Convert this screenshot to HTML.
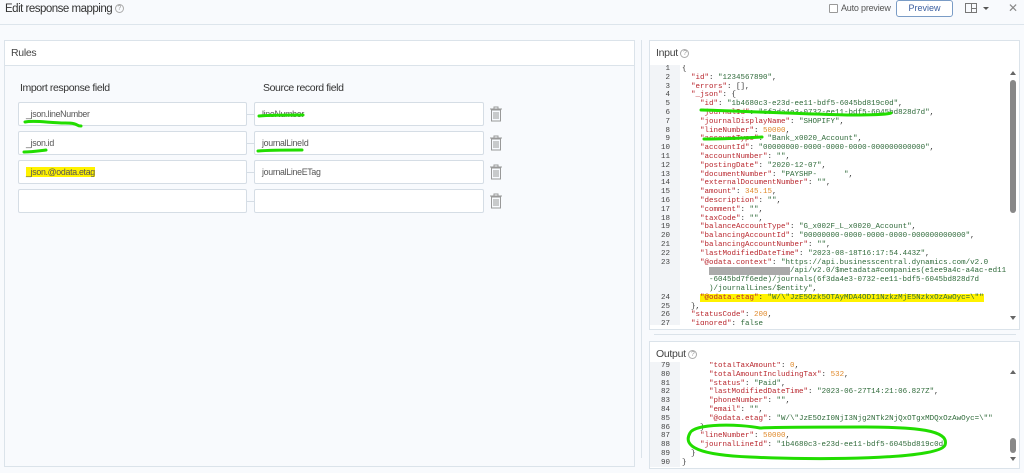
<!DOCTYPE html>
<html><head><meta charset="utf-8"><style>
*{box-sizing:border-box;margin:0;padding:0}
body{width:1024px;height:473px;background:#f8fafd;font-family:"Liberation Sans",sans-serif;position:relative;overflow:hidden;color:#333}
.abs{position:absolute}
.hdr{left:0;top:0;width:1024px;height:25px;border-bottom:1px solid #dde5ec;background:#f8fafd}
.q{display:inline-block;width:9px;height:9px;border:1px solid #aaa;border-radius:50%;font-size:7px;line-height:7px;text-align:center;color:#999;vertical-align:middle;letter-spacing:0}
.panel{background:#f8fafd;border:1px solid #dbe3ea}
.ph{background:#fff;border-bottom:1px solid #dbe3ea;height:25px;font-size:10.5px;letter-spacing:-0.3px;line-height:25px;padding-left:6px;color:#444}
.inp{position:absolute;height:24px;background:#fff;border:1px solid #d5dde5;border-radius:2px;font-size:8.8px;letter-spacing:-0.3px;line-height:22px;padding-left:7px;color:#555}
.code{font-family:"Liberation Mono",monospace;font-size:7.5px;line-height:8.8px;white-space:pre}
.gut{position:absolute;background:#f2f4f7;text-align:right;color:#444}
.k{color:#b8262d}.s{color:#2f6a3a}.n{color:#e08a2c}.p{color:#333}
.lbl{font-size:10.5px;letter-spacing:-0.4px;color:#333}
</style></head><body>
<div class="abs hdr">
 <div class="abs" style="left:5px;top:3px;font-size:11.5px;letter-spacing:-0.5px;color:#333">Edit response mapping <span class="q">?</span></div>
 <div class="abs" style="left:829px;top:4px;width:9px;height:9px;border:1px solid #999;border-radius:1px;background:#fff"></div>
 <div class="abs" style="left:841px;top:3px;font-size:9px;letter-spacing:-0.2px;color:#555">Auto preview</div>
 <div class="abs" style="left:896px;top:0;width:57px;height:17px;border:1px solid #7a9cc6;border-radius:3px;background:#fff;font-size:9px;color:#3b5fa0;text-align:center;line-height:15px">Preview</div>
 <div class="abs" style="left:965px;top:3px;width:12px;height:10px;border:1px solid #777"></div>
 <div class="abs" style="left:971px;top:3px;width:1px;height:10px;background:#777"></div>
 <div class="abs" style="left:971px;top:8px;width:6px;height:1px;background:#777"></div>
 <div class="abs" style="left:983px;top:7px;border-left:3px solid transparent;border-right:3px solid transparent;border-top:3px solid #555"></div>
 <div class="abs" style="left:1008px;top:1px;font-size:12px;color:#888">✕</div>
</div>

<div class="abs panel" style="left:4px;top:40px;width:631px;height:427px">
 <div class="ph">Rules</div>
</div>
<div class="abs lbl" style="left:20px;top:82px">Import response field</div>
<div class="abs lbl" style="left:263px;top:82px">Source record field</div>
<div class="inp" style="left:18px;top:102px;width:229px">_json.lineNumber</div>
<div class="inp" style="left:254px;top:102px;width:230px">lineNumber</div>
<div class="inp" style="left:18px;top:131px;width:229px">_json.id</div>
<div class="inp" style="left:254px;top:131px;width:230px">journalLineId</div>
<div class="inp" style="left:18px;top:160px;width:229px"><span style="background:#fff200">_json.@odata.etag</span></div>
<div class="inp" style="left:254px;top:160px;width:230px">journalLineETag</div>
<div class="inp" style="left:18px;top:189px;width:229px"></div>
<div class="inp" style="left:254px;top:189px;width:230px"></div>
<div class="abs" style="left:247px;top:114px;width:7px;height:1px;background:#d5dde5"></div>
<div class="abs" style="left:247px;top:143px;width:7px;height:1px;background:#d5dde5"></div>
<div class="abs" style="left:247px;top:172px;width:7px;height:1px;background:#d5dde5"></div>
<div class="abs" style="left:247px;top:201px;width:7px;height:1px;background:#d5dde5"></div>
<svg class="abs" style="left:0;top:0" width="640" height="473">
 <g fill="none" stroke="#999" stroke-width="1">
  <g id="t"><path d="M490 109h12M494 109v-2h4v2M491.5 110h9v11h-9z M494 112v7M496 112v7M498 112v7"/></g>
  <use href="#t" y="29"/><use href="#t" y="58"/><use href="#t" y="87"/>
 </g>
 <g fill="none" stroke="#22dd00" stroke-width="3" stroke-linecap="round">
  <path d="M25 122c10-2 25 1 40 1s10 3 16 3"/>
  <path d="M24 152c8 0 14-1 22-2"/>
  <path d="M259 116c12-1 30-1 44-1"/>
  <path d="M258 151c12-1 30-1 44-1"/>
 </g>
</svg>

<div class="abs" style="left:641px;top:40px;width:1px;height:418px;background:#dbe3ea"></div>

<!-- Input panel -->
<div class="abs panel" style="left:649px;top:40px;width:371px;height:290px;background:#fff">
 <div class="ph" style="border-bottom:none">Input <span class="q">?</span></div>
</div>
<div class="gut code" style="left:650px;top:65px;width:30px;height:260px;padding-right:10px">1
2
3
4
5
6
7
8
9
10
11
12
13
14
15
16
17
18
19
20
21
22
23



24
25
26
27</div>
<div class="abs code" style="left:682px;top:65px;width:325px;height:260px;overflow:hidden"><span class="p">{</span>
  <span class="k">"id"</span>: <span class="s">"1234567890"</span>,
  <span class="k">"errors"</span>: [],
  <span class="k">"_json"</span>: {
    <span class="k">"id"</span>: <span class="s">"1b4680c3-e23d-ee11-bdf5-6045bd819c0d"</span>,
    <span class="k">"journalId"</span>: <span class="s">"6f3da4e3-0732-ee11-bdf5-6045bd828d7d"</span>,
    <span class="k">"journalDisplayName"</span>: <span class="s">"SHOPIFY"</span>,
    <span class="k">"lineNumber"</span>: <span class="n">50000</span>,
    <span class="k">"accountType"</span>: <span class="s">"Bank_x0020_Account"</span>,
    <span class="k">"accountId"</span>: <span class="s">"00000000-0000-0000-0000-000000000000"</span>,
    <span class="k">"accountNumber"</span>: <span class="s">""</span>,
    <span class="k">"postingDate"</span>: <span class="s">"2020-12-07"</span>,
    <span class="k">"documentNumber"</span>: <span class="s">"PAYSHP-      "</span>,
    <span class="k">"externalDocumentNumber"</span>: <span class="s">""</span>,
    <span class="k">"amount"</span>: <span class="n">345.15</span>,
    <span class="k">"description"</span>: <span class="s">""</span>,
    <span class="k">"comment"</span>: <span class="s">""</span>,
    <span class="k">"taxCode"</span>: <span class="s">""</span>,
    <span class="k">"balanceAccountType"</span>: <span class="s">"G_x002F_L_x0020_Account"</span>,
    <span class="k">"balancingAccountId"</span>: <span class="s">"00000000-0000-0000-0000-000000000000"</span>,
    <span class="k">"balancingAccountNumber"</span>: <span class="s">""</span>,
    <span class="k">"lastModifiedDateTime"</span>: <span class="s">"2023-08-18T16:17:54.443Z"</span>,
    <span class="k">"@odata.context"</span>: <span class="s">"https://api.businesscentral.dynamics.com/v2.0</span>
<span class="s">      <span style="background:#aaa;color:#aaa">xxxxxxxxxxxxxxxxxx</span>/api/v2.0/$metadata#companies(e1ee9a4c-a4ac-ed11-9a88</span>
<span class="s">      -6045bd7f6ede)/journals(6f3da4e3-0732-ee11-bdf5-6045bd828d7d</span>
<span class="s">      )/journalLines/$entity"</span>,
    <span style="background:#fff200"><span class="k">"@odata.etag"</span>: <span class="s">"W/\"JzE5Ozk5OTAyMDA4ODI1NzkzMjE5NzkxOzAwOyc=\""</span></span>
  },
  <span class="k">"statusCode"</span>: <span class="n">200</span>,
  <span class="k">"ignored"</span>: <span class="s">false</span></div>
<div class="abs" style="left:1009px;top:70px;width:8px;height:255px;background:#fff"></div>
<div class="abs" style="left:1010px;top:80px;width:6px;height:133px;background:#888;border-radius:3px"></div>
<div class="abs" style="left:1010px;top:71px;border-left:3px solid transparent;border-right:3px solid transparent;border-bottom:4px solid #666"></div>
<div class="abs" style="left:1010px;top:316px;border-left:3px solid transparent;border-right:3px solid transparent;border-top:4px solid #666"></div>

<div class="abs" style="left:654px;top:334px;width:362px;height:1px;background:#dbe3ea"></div>

<!-- Output panel -->
<div class="abs panel" style="left:649px;top:341px;width:371px;height:128px;background:#fff">
 <div class="ph" style="border-bottom:none">Output <span class="q">?</span></div>
</div>
<div class="gut code" style="left:650px;top:362px;width:30px;height:105px;padding-right:10px;padding-top:0">79
80
81
82
83
84
85
86
87
88
89
90</div>
<div class="abs code" style="left:682px;top:362px;width:325px;height:105px;overflow:hidden">      <span class="k">"totalTaxAmount"</span>: <span class="n">0</span>,
      <span class="k">"totalAmountIncludingTax"</span>: <span class="n">532</span>,
      <span class="k">"status"</span>: <span class="s">"Paid"</span>,
      <span class="k">"lastModifiedDateTime"</span>: <span class="s">"2023-06-27T14:21:06.827Z"</span>,
      <span class="k">"phoneNumber"</span>: <span class="s">""</span>,
      <span class="k">"email"</span>: <span class="s">""</span>,
      <span class="k">"@odata.etag"</span>: <span class="s">"W/\"JzE5OzI0NjI3Njg2NTk2NjQxOTgxMDQxOzAwOyc=\""</span>
    }
    <span class="k">"lineNumber"</span>: <span class="n">50000</span>,
    <span class="k">"journalLineId"</span>: <span class="s">"1b4680c3-e23d-ee11-bdf5-6045bd819c0d"</span>
  }
}</div>
<div class="abs" style="left:1010px;top:438px;width:6px;height:15px;background:#888;border-radius:3px"></div>
<div class="abs" style="left:1010px;top:370px;border-left:3px solid transparent;border-right:3px solid transparent;border-bottom:4px solid #666"></div>
<div class="abs" style="left:1010px;top:457px;border-left:3px solid transparent;border-right:3px solid transparent;border-top:4px solid #666"></div>

<svg class="abs" style="left:640px;top:0" width="384" height="473">
 <g fill="none" stroke="#22dd00" stroke-width="3" stroke-linecap="round">
  <path d="M61 110c40 1 100 4 150 5 15 0 35 0 40-2"/>
  <path d="M64 139c20 0 40-1 58-2"/>
  <path d="M120 428c-20-4-65-5-70 5-8 14 10 22 60 24 60 3 190 3 195-12 5-15-30-18-80-18-60 0-90 0-105 1"/>
 </g>
</svg>
</body></html>
